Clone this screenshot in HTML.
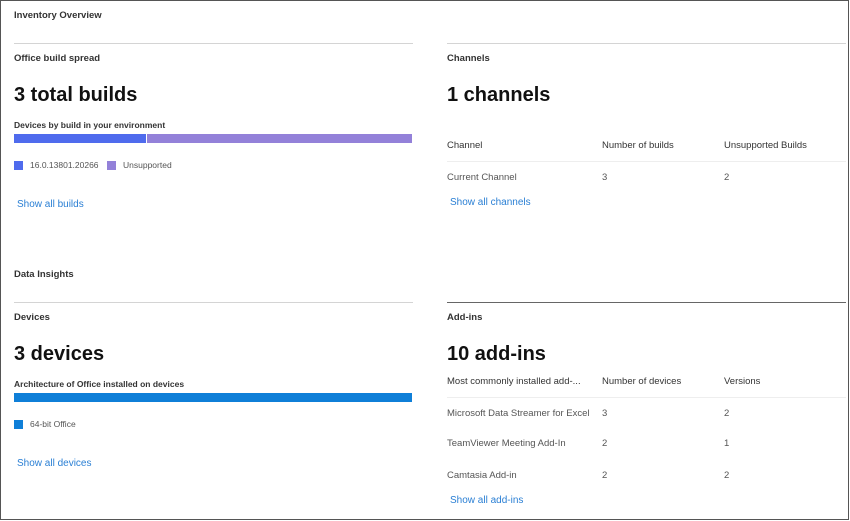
<!DOCTYPE html>
<html><head><meta charset="utf-8"><style>
*{margin:0;padding:0;box-sizing:border-box}
body{width:850px;height:521px;background:#fff;font-family:"Liberation Sans",sans-serif;position:relative;overflow:hidden}
.frame{position:absolute;left:0;top:0;width:849px;height:520px;border:1px solid #555}
.a{position:absolute;white-space:nowrap}
.lbl{font-size:9.5px;font-weight:bold;color:#333}
.big{font-size:20px;font-weight:bold;color:#111}
.t{font-size:9.5px;color:#555}
.th{font-size:9.5px;color:#333}
.lnk{font-size:10px;color:#2a7fd4}
.hl{position:absolute;height:1px;background:#d4d4d4}
</style></head><body>
<div class="frame"></div>
<div class="a lbl" style="left:14px;top:10px">Inventory Overview</div>
<div class="hl" style="left:14px;top:43px;width:399px"></div>
<div class="hl" style="left:447px;top:43px;width:399px"></div>
<div class="a lbl" style="left:14px;top:53px">Office build spread</div>
<div class="a big" style="left:14px;top:84px">3 total builds</div>
<div class="a lbl" style="left:14px;top:120px;font-size:8.5px">Devices by build in your environment</div>
<div class="a" style="left:14px;top:134px;width:132px;height:9px;background:#4f6bed"></div>
<div class="a" style="left:147px;top:134px;width:265px;height:9px;background:#9381d9"></div>
<div class="a" style="left:14px;top:161px;width:9px;height:9px;background:#4f6bed"></div>
<div class="a t" style="left:30px;top:160px;font-size:8.5px">16.0.13801.20266</div>
<div class="a" style="left:107px;top:161px;width:9px;height:9px;background:#9381d9"></div>
<div class="a t" style="left:123px;top:160px;font-size:8.5px">Unsupported</div>
<div class="a lnk" style="left:17px;top:199px">Show all builds</div>

<div class="a lbl" style="left:447px;top:53px">Channels</div>
<div class="a big" style="left:447px;top:84px">1 channels</div>
<div class="a th" style="left:447px;top:140px">Channel</div>
<div class="a th" style="left:602px;top:140px">Number of builds</div>
<div class="a th" style="left:724px;top:140px">Unsupported Builds</div>
<div class="hl" style="left:447px;top:161px;width:399px;background:#eee"></div>
<div class="a t" style="left:447px;top:172px">Current Channel</div>
<div class="a t" style="left:602px;top:172px">3</div>
<div class="a t" style="left:724px;top:172px">2</div>
<div class="a lnk" style="left:450px;top:197px">Show all channels</div>

<div class="a lbl" style="left:14px;top:269px">Data Insights</div>
<div class="hl" style="left:14px;top:302px;width:399px"></div>
<div class="hl" style="left:447px;top:302px;width:399px;background:#666"></div>
<div class="a lbl" style="left:14px;top:312px">Devices</div>
<div class="a big" style="left:14px;top:343px">3 devices</div>
<div class="a lbl" style="left:14px;top:379px;font-size:8.5px">Architecture of Office installed on devices</div>
<div class="a" style="left:14px;top:393px;width:398px;height:9px;background:#0f7fd8"></div>
<div class="a" style="left:14px;top:420px;width:9px;height:9px;background:#0f7fd8"></div>
<div class="a t" style="left:30px;top:419px;font-size:8.5px">64-bit Office</div>
<div class="a lnk" style="left:17px;top:458px">Show all devices</div>

<div class="a lbl" style="left:447px;top:312px">Add-ins</div>
<div class="a big" style="left:447px;top:343px">10 add-ins</div>
<div class="a th" style="left:447px;top:376px">Most commonly installed add-...</div>
<div class="a th" style="left:602px;top:376px">Number of devices</div>
<div class="a th" style="left:724px;top:376px">Versions</div>
<div class="hl" style="left:447px;top:397px;width:399px;background:#eee"></div>
<div class="a t" style="left:447px;top:408px">Microsoft Data Streamer for Excel</div>
<div class="a t" style="left:602px;top:408px">3</div>
<div class="a t" style="left:724px;top:408px">2</div>
<div class="a t" style="left:447px;top:438px">TeamViewer Meeting Add-In</div>
<div class="a t" style="left:602px;top:438px">2</div>
<div class="a t" style="left:724px;top:438px">1</div>
<div class="a t" style="left:447px;top:470px">Camtasia Add-in</div>
<div class="a t" style="left:602px;top:470px">2</div>
<div class="a t" style="left:724px;top:470px">2</div>
<div class="a lnk" style="left:450px;top:495px">Show all add-ins</div>
</body></html>
